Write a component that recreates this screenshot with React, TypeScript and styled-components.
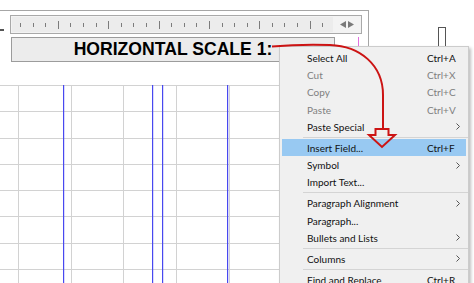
import React from "react";
import styled, { createGlobalStyle } from "styled-components";

const Global = createGlobalStyle`
  html, body { margin: 0; padding: 0; background: #ffffff; }
  body { font-family: "Liberation Sans", Arial, sans-serif; }
`;

const Page = styled.div`
  position: relative;
  width: 474px;
  height: 283px;
  overflow: hidden;
  background: #ffffff;
`;

const Top = styled.div`
  display: flex;
  align-items: flex-start;
  height: 85px;
  padding-top: 10px;
  box-sizing: border-box;
`;

const Frame = styled.div`
  width: 369px;
  height: 75px;
  box-sizing: border-box;
  border-top: 1px solid #a6a6a6;
  border-right: 1px solid #a6a6a6;
  padding-top: 4px;
  display: flex;
  flex-direction: column;
  gap: 3px;
`;

const RulerRow = styled.div`
  display: flex;
  align-items: center;
  height: 19px;
`;

const LeftDash = styled.div`
  width: 4px;
  height: 2px;
  background: #555555;
  margin: 10px 6px 0 0;
`;

const RulerBar = styled.div`
  width: 352px;
  height: 19px;
  box-sizing: border-box;
  border: 1px solid #a9a9a9;
  background: #f3f3f3;
  display: flex;
  align-items: center;
  padding-left: 1px;
`;

const Ruler = styled.div`
  width: 321px;
  height: 15px;
  box-sizing: border-box;
  background: #ececec;
  display: flex;
  align-items: center;
`;

const Ticks = styled.div`
  display: flex;
  align-items: center;
  margin-left: 8px;
`;

const Tick = styled.span<{ $big: boolean }>`
  flex: none;
  width: 12.6px;
  height: ${(p) => (p.$big ? 8 : 4)}px;
  box-sizing: border-box;
  border-left: 1px solid #7c7c7c;
`;

const ArrowPair = styled.div`
  display: flex;
  gap: 2px;
  margin-left: 7px;
  align-items: center;
`;

const TitleRow = styled.div`
  display: flex;
  align-items: flex-start;
  padding-left: 11px;
`;

const TitleBox = styled.div`
  width: 324px;
  height: 25px;
  box-sizing: border-box;
  border: 1px solid #9c9c9c;
  background: #ececec;
  display: flex;
  align-items: center;
  justify-content: center;
  font-family: "Liberation Sans", Arial, sans-serif;
  font-weight: bold;
  font-size: 17.6px;
  color: #000000;
  white-space: nowrap;
`;

const PinkMark = styled.div`
  width: 1px;
  height: 13px;
  background: #e070e0;
  margin-left: 23px;
`;

const Cursor = styled.div`
  width: 8px;
  height: 30px;
  box-sizing: border-box;
  border: 1.5px solid #555555;
  border-bottom: none;
  margin: 17px 0 0 69px;
`;

const Sheet = styled.div`
  position: relative;
  display: grid;
  grid-template-columns: 18px repeat(6, 51.7px);
  grid-auto-rows: 25.3px;
  gap: 1px;
  padding-top: 1px;
  background: #d2d2d2;
  width: max-content;
`;

const Cell = styled.div`
  background: #ffffff;
`;

const Guide = styled.div`
  position: absolute;
  top: 0;
  bottom: 0;
  width: 1px;
  background: #4848f0;
  box-shadow: 0.5px 0 0 rgba(90, 90, 240, 0.45);
`;

const Menu = styled.div`
  position: absolute;
  left: 279px;
  top: 46px;
  width: 190px;
  box-sizing: border-box;
  background: #f0f0f0;
  border: 1px solid #cccccc;
  box-shadow: 2px 2px 3px rgba(0, 0, 0, 0.25);
  padding: 2px 0;
  font-family: Lato, "Noto Sans", sans-serif;
  font-size: 10px;
`;

const Item = styled.div<{ $disabled?: boolean; $active?: boolean }>`
  display: grid;
  grid-template-columns: 25px 120px 1fr 16px;
  align-items: center;
  height: 17.3px;
  margin: 0 2px;
  white-space: nowrap;
  background: ${(p) => (p.$active ? "#98c9f2" : "transparent")};
  color: ${(p) => (p.$disabled ? "#7f7f7f" : "#111111")};
`;

const Label = styled.span`
  grid-column: 2;
`;

const Shortcut = styled.span`
  grid-column: 3;
`;

const Sub = styled.span`
  grid-column: 4;
  display: flex;
  justify-content: center;
`;

const Separator = styled.div`
  height: 1px;
  background: #d4d4d4;
  margin: 1.3px 0 1.3px 23px;
`;

const Overlay = styled.svg`
  position: absolute;
  left: 0;
  top: 0;
  pointer-events: none;
`;

const Chevron = () => (
  <svg width="4" height="7" viewBox="0 0 4 7">
    <polyline points="0.5,0.5 3.5,3.5 0.5,6.5" fill="none" stroke="#555" strokeWidth="1" />
  </svg>
);

type Entry =
  | { sep: true }
  | { sep?: false; label: string; shortcut?: string; disabled?: boolean; sub?: boolean; active?: boolean };

const entries: Entry[] = [
  { label: "Select All", shortcut: "Ctrl+A" },
  { label: "Cut", shortcut: "Ctrl+X", disabled: true },
  { label: "Copy", shortcut: "Ctrl+C", disabled: true },
  { label: "Paste", shortcut: "Ctrl+V", disabled: true },
  { label: "Paste Special", sub: true },
  { sep: true },
  { label: "Insert Field...", shortcut: "Ctrl+F", active: true },
  { label: "Symbol", sub: true },
  { label: "Import Text..." },
  { sep: true },
  { label: "Paragraph Alignment", sub: true },
  { label: "Paragraph..." },
  { label: "Bullets and Lists", sub: true },
  { sep: true },
  { label: "Columns", sub: true },
  { sep: true },
  { label: "Find and Replace", shortcut: "Ctrl+R" },
];

const bigTicks = new Set([3, 7, 11, 15, 19, 23]);
const guides = [63, 152, 162, 227];

export default function App() {
  return (
    <Page>
      <Global />
      <Top>
        <Frame>
          <RulerRow>
            <LeftDash />
            <RulerBar>
              <Ruler>
                <svg width="5" height="15" viewBox="0 0 5 15">
                  <path d="M0.5 0.5 H4.5 M2.5 0.5 V14.5 M0.5 14.5 H4.5" stroke="#333" strokeWidth="1.2" fill="none" />
                </svg>
                <Ticks>
                  {Array.from({ length: 25 }, (_, i) => (
                    <Tick key={i} $big={bigTicks.has(i)} />
                  ))}
                </Ticks>
                <svg width="5" height="15" viewBox="0 0 5 15" style={{ marginLeft: -1 }}>
                  <path d="M2.5 9 V15 M0.5 15 L2.5 11 L4.5 15 Z" stroke="#333" strokeWidth="1" fill="#333" />
                </svg>
              </Ruler>
              <ArrowPair>
                <svg width="6" height="7" viewBox="0 0 6 7">
                  <polygon points="6,0 0,3.5 6,7" fill="#7a7a7a" />
                </svg>
                <svg width="6" height="7" viewBox="0 0 6 7">
                  <polygon points="0,0 6,3.5 0,7" fill="#7a7a7a" />
                </svg>
              </ArrowPair>
            </RulerBar>
          </RulerRow>
          <TitleRow>
            <TitleBox>HORIZONTAL SCALE 1:</TitleBox>
            <PinkMark />
          </TitleRow>
        </Frame>
        <Cursor />
      </Top>
      <Sheet>
        {Array.from({ length: 56 }, (_, i) => (
          <Cell key={i} />
        ))}
        {guides.map((x) => (
          <Guide key={x} style={{ left: x }} />
        ))}
      </Sheet>
      <Menu>
        {entries.map((e, i) =>
          e.sep ? (
            <Separator key={i} />
          ) : (
            <Item key={i} $disabled={e.disabled} $active={e.active}>
              <Label>{e.label}</Label>
              {e.shortcut && <Shortcut>{e.shortcut}</Shortcut>}
              {e.sub && (
                <Sub>
                  <Chevron />
                </Sub>
              )}
            </Item>
          )
        )}
      </Menu>
      <Overlay width="474" height="283" viewBox="0 0 474 283">
        <path
          d="M272 46.5 Q300 44 330 45 C360 46 383 65 383 95 L383 129"
          fill="none"
          stroke="#cc1414"
          strokeWidth="2"
        />
        <polygon
          points="375.5,129 388.5,129 388.5,135 395,135 382,147 369,135 375.5,135"
          fill="none"
          stroke="#cc1414"
          strokeWidth="2"
          strokeLinejoin="miter"
        />
      </Overlay>
    </Page>
  );
}
